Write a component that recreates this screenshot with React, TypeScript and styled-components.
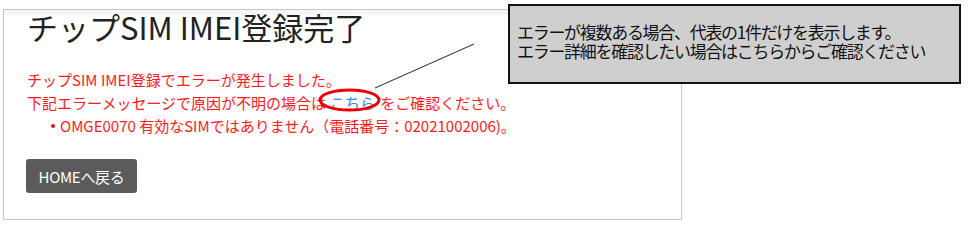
import React from "react";
import styled, { createGlobalStyle } from "styled-components";

const Global = createGlobalStyle`
  html, body { margin: 0; padding: 0; background: #ffffff; }
  body { font-family: "Noto Sans CJK JP", "Noto Sans", sans-serif; }
`;

const Stage = styled.div`
  position: relative;
  width: 969px;
  height: 225px;
  padding: 9px 0 0 3px;
  box-sizing: border-box;
`;

const Frame = styled.div`
  width: 679px;
  height: 211px;
  box-sizing: border-box;
  border: 1px solid #c6c6c6;
  display: flex;
  flex-direction: column;
`;

const Strip = styled.div`
  height: 5px;
  background: #f6f6f6;
`;

const Content = styled.div`
  padding: 0 0 0 23px;
  display: flex;
  flex-direction: column;
`;

const Title = styled.h1`
  margin: -3px 0 0 0;
  font-family: "Noto Sans CJK JP", sans-serif;
  font-weight: 400;
  font-size: 31px;
  line-height: 30px;
  color: #222;
`;

const Messages = styled.div`
  margin-top: 26px;
  color: #ff1a1a;
  font-size: 15px;
  line-height: 23px;
`;

const Line = styled.div`
  white-space: nowrap;
`;

const Link = styled.a`
  color: #2b8ce8;
  text-decoration: none;
  padding: 0 5px 0 4px;
`;

const List = styled.ul`
  margin: 0;
  padding: 0 0 0 33px;
  list-style: none;
`;

const Item = styled.li`
  position: relative;
  white-space: nowrap;
  &::before {
    content: "";
    position: absolute;
    left: -9px;
    top: 10px;
    width: 4px;
    height: 4px;
    border-radius: 50%;
    background: #ee1111;
  }
`;

const Button = styled.button`
  margin-top: 22px;
  align-self: flex-start;
  margin-left: -1px;
  width: 111px;
  height: 34px;
  border: none;
  border-radius: 3px;
  background: #5b5b5b;
  color: #fff;
  font-family: "Noto Sans CJK JP", sans-serif;
  font-size: 15px;
  letter-spacing: -0.3px;
  padding: 0;
`;

const Callout = styled.div`
  position: absolute;
  left: 508px;
  top: 4px;
  width: 453px;
  height: 80px;
  box-sizing: border-box;
  border: 2px solid #111;
  background: #d0cfd0;
  padding: 16px 0 0 7px;
  font-size: 17px;
  line-height: 19px;
  letter-spacing: -1.3px;
  color: #111;
  white-space: nowrap;
`;

const Overlay = styled.svg`
  position: absolute;
  left: 0;
  top: 0;
  pointer-events: none;
`;

export default function App() {
  return (
    <Stage>
      <Global />
      <Frame>
        <Strip />
        <Content>
          <Title>チップSIM IMEI登録完了</Title>
          <Messages>
            <Line>チップSIM IMEI登録でエラーが発生しました。</Line>
            <Line>
              下記エラーメッセージで原因が不明の場合は<Link href="#">こちら</Link>をご確認ください。
            </Line>
            <List>
              <Item>OMGE0070 有効なSIMではありません（電話番号：02021002006)。</Item>
            </List>
          </Messages>
          <Button>HOMEへ戻る</Button>
        </Content>
      </Frame>
      <Overlay width="969" height="225" viewBox="0 0 969 225">
        <ellipse cx="349.5" cy="100" rx="29.5" ry="10" fill="none" stroke="#ee0000" strokeWidth="3" />
        <line x1="375" y1="88" x2="474" y2="44" stroke="#222" strokeWidth="1" />
      </Overlay>
      <Callout>
        <div>エラーが複数ある場合、代表の1件だけを表示します。</div>
        <div>エラー詳細を確認したい場合はこちらからご確認ください</div>
      </Callout>
    </Stage>
  );
}
